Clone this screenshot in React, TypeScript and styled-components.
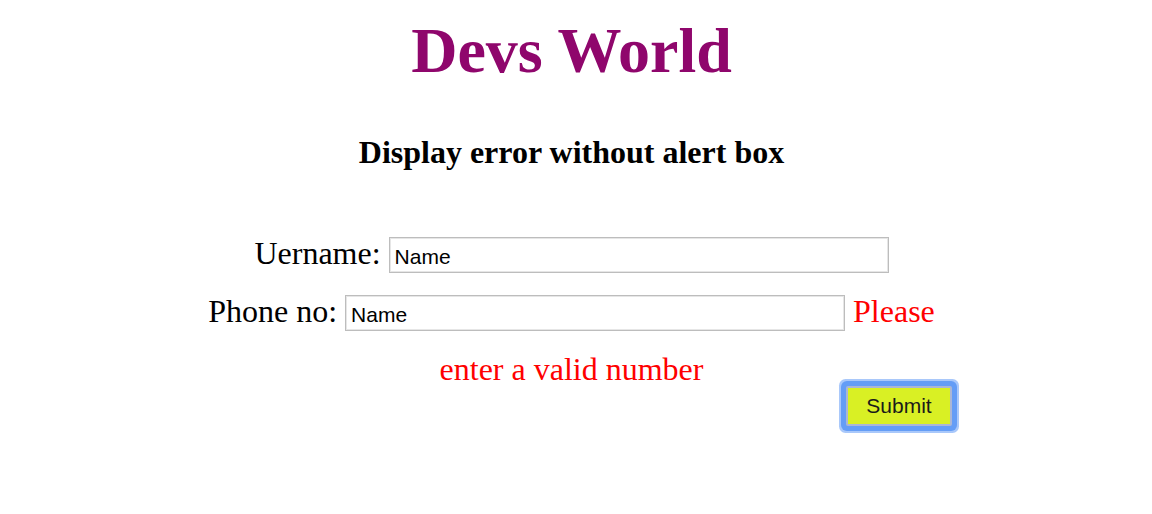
import React from 'react'
import styled, { createGlobalStyle } from 'styled-components'

const GlobalStyle = createGlobalStyle`
    html, body {
        margin: 0;
        padding: 0;
        background: #ffffff;
    }
    body {
        font-family: "Liberation Serif", "Times New Roman", serif;
        color: #000000;
    }
`

const Page = styled.main`
    padding: 19px 9px 0 0;
    text-align: center;
`

const Title = styled.h1`
    margin: 0;
    font-size: 64px;
    line-height: 64px;
    font-weight: bold;
    color: #8f066c;
`

const Subtitle = styled.h3`
    margin: 53px 0 0;
    font-size: 32px;
    line-height: 32px;
    font-weight: bold;
`

const Form = styled.form`
    width: 759px;
    margin: 56px auto 0;
    padding-bottom: 20px;
    text-align: center;
`

const Row = styled.div`
    font-size: 32px;
    line-height: 58px;
`

const Input = styled.input`
    box-sizing: border-box;
    width: 500px;
    height: 36px;
    padding: 4px 5px 0;
    margin: 0;
    border: 1px solid #bdbdbd;
    box-shadow: inset 0 0 0 1px #e6e6e6;
    border-radius: 0;
    font-family: "Liberation Sans", Arial, sans-serif;
    font-size: 21px;
    color: #000000;
    vertical-align: baseline;
    outline: none;
`

const Error = styled.span`
    color: #ff0000;
`

const ButtonRow = styled.div`
    display: flex;
    justify-content: flex-end;
    margin-top: -12px;
`

const SubmitButton = styled.button`
    box-sizing: border-box;
    width: 106px;
    height: 40px;
    margin: 0 -1px 0 0;
    padding: 0;
    border: 2px solid #aab6d6;
    border-radius: 2px;
    background: #d9f024;
    box-shadow: 0 0 0 5px #649df6, 0 0 0 7px #a9c8fa;
    font-family: "Liberation Sans", Arial, sans-serif;
    font-size: 21px;
    color: #1a1a1a;
    cursor: pointer;
`

function App() {
    return (
        <>
            <GlobalStyle />
            <Page>
                <Title>Devs World</Title>
                <Subtitle>Display error without alert box</Subtitle>
                <Form onSubmit={(e) => e.preventDefault()}>
                    <Row>
                        Uername: <Input type="text" defaultValue="Name" />
                    </Row>
                    <Row>
                        Phone no: <Input type="text" defaultValue="Name" />{' '}
                        <Error>Please enter a valid number</Error>
                    </Row>
                    <ButtonRow>
                        <SubmitButton type="submit">Submit</SubmitButton>
                    </ButtonRow>
                </Form>
            </Page>
        </>
    )
}

export default App
